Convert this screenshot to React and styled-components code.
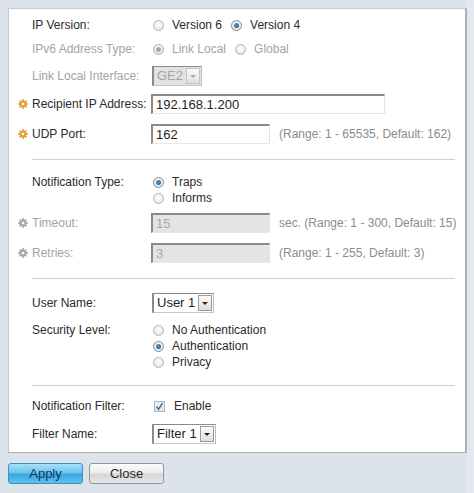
import React from "react";
import styled, { createGlobalStyle, css } from "styled-components";

const Global = createGlobalStyle`
  html, body { margin: 0; padding: 0; background: #dce3ea; }
  body { font-family: "Liberation Sans", Arial, sans-serif; font-size: 12px; color: #2a2a2a; }
`;

const Page = styled.div`
  width: 474px;
  height: 493px;
  box-sizing: border-box;
  padding: 8px 7px 0 8px;
  background: linear-gradient(to right, #dce3ea 0, #dce3ea 466px, #e3e9ee 468px);
`;

const Panel = styled.div`
  background: #fff;
  border: 1px solid #c3cbd2;
  border-right: 2px solid #aab2b8;
  border-bottom: 1px solid #a9b1b7;
  padding: 4px 10px 2px 9px;
`;

const Row = styled.div`
  display: grid;
  grid-template-columns: 14px 119px 1fr;
  align-items: ${(p) => (p.$top ? "start" : "center")};
  height: ${(p) => p.$h}px;
  box-sizing: border-box;
  margin-top: ${(p) => p.$mt || 0}px;
`;

const IconCell = styled.span`
  display: flex;
  align-items: center;
  height: 100%;
`;

const Label = styled.span`
  color: ${(p) => (p.$disabled ? "#a3a3a3" : "#2a2a2a")};
  white-space: nowrap;
  line-height: 16px;
`;

const Controls = styled.div`
  display: flex;
  align-items: center;
  padding-left: 2px;
`;

const Stack = styled.div`
  display: flex;
  flex-direction: column;
  padding-left: 2px;
`;

const Divider = styled.div`
  height: 1px;
  background: #cfcfcf;
  margin: ${(p) => p.$mt}px 0 ${(p) => p.$mb}px 14px;
`;

const RadioItem = styled.label`
  display: flex;
  align-items: center;
  height: 16px;
  margin-right: 9px;
  color: ${(p) => (p.$disabled ? "#a3a3a3" : "#2a2a2a")};
  white-space: nowrap;
`;

const RadioDot = styled.span`
  width: 9px;
  height: 9px;
  border-radius: 50%;
  border: 1px solid #b4b4b4;
  background: radial-gradient(circle at 50% 40%, #ffffff 0%, #eeeeee 55%, #d6d6d6 100%);
  margin-right: 8px;
  position: relative;
  flex: none;
  ${(p) =>
    p.$checked &&
    css`
      border-color: ${p.$disabled ? "#b0b0b0" : "#7a8d9c"};
      &::after {
        content: "";
        position: absolute;
        left: 2px;
        top: 2px;
        width: 5px;
        height: 5px;
        border-radius: 50%;
        background: ${p.$disabled
          ? "radial-gradient(circle, #9a9a9a 0%, #bdbdbd 100%)"
          : "radial-gradient(circle at 40% 40%, #5e97c4 0%, #1f4f78 100%)"};
      }
    `}
`;

const TextInput = styled.div`
  width: ${(p) => p.$w}px;
  height: 20px;
  box-sizing: border-box;
  margin-left: -2px;
  border-style: solid;
  border-width: 2px 1px 1px 2px;
  border-color: #8a8a8a #e2e2e2 #e8e8e8 #8a8a8a;
  background: ${(p) => (p.$disabled ? "#e4e4e4" : "#fff")};
  color: ${(p) => (p.$disabled ? "#a8a8a8" : "#1e1e1e")};
  font-size: 13px;
  line-height: 17px;
  padding-left: 3px;
  flex: none;
`;

const Hint = styled.span`
  color: #8c8c8c;
  margin-left: 9px;
  white-space: nowrap;
`;

const SelectBox = styled.div`
  display: inline-flex;
  align-items: stretch;
  height: 20px;
  margin-left: -1px;
  box-sizing: border-box;
  border-style: solid;
  border-width: 1px 1px 1px 2px;
  border-color: #8a8a8a #bdbdbd #c8c8c8 #8a8a8a;
  background: ${(p) => (p.$disabled ? "#e2e2e2" : "#fff")};
  color: ${(p) => (p.$disabled ? "#a5a5a5" : "#1e1e1e")};
  font-size: 13px;
`;

const SelectText = styled.span`
  padding: 0 3px 0 3px;
  line-height: 18px;
`;

const SelectBtn = styled.span`
  width: 14px;
  margin: 1px 1px 1px 0;
  box-sizing: border-box;
  border: 1px solid ${(p) => (p.$disabled ? "#c4c4c4" : "#9a9a9a")};
  background: linear-gradient(#fbfbfb, #dedede);
  display: flex;
  align-items: center;
  justify-content: center;
  &::after {
    content: "";
    border-left: 3px solid transparent;
    border-right: 3px solid transparent;
    border-top: 3px solid ${(p) => (p.$disabled ? "#aaa" : "#222")};
  }
`;

const CheckItem = styled.label`
  display: flex;
  align-items: center;
  height: 16px;
`;

const CheckBox = styled.span`
  width: 11px;
  height: 11px;
  box-sizing: border-box;
  border: 1px solid #a9b6c3;
  background: linear-gradient(#eef2f6, #dfe6ee);
  margin: 0 9px 0 1px;
  display: flex;
  align-items: center;
  justify-content: center;
`;

const Buttons = styled.div`
  display: flex;
  gap: 6px;
  margin-top: 10px;
`;

const Button = styled.button`
  width: 75px;
  height: 21px;
  border-radius: 3px;
  font-family: "Liberation Sans", Arial, sans-serif;
  font-size: 13px;
  padding: 0;
  ${(p) =>
    p.$primary
      ? css`
          border: 1px solid #3d8fbf;
          background: linear-gradient(#a8e0fa 0%, #6cc4ef 45%, #39a8e0 55%, #5ec0ee 100%);
          color: #13365a;
        `
      : css`
          border: 1px solid #8f979c;
          background: linear-gradient(#fdfdfd 0%, #ececec 45%, #d6d6d6 55%, #e6e6e6 100%);
          color: #2b2b2b;
        `}
`;

const Gear = ({ color }) => (
  <svg width="10" height="10" viewBox="0 0 10 10">
    <g fill={color}>
      {[0, 45, 90, 135].map((a) => (
        <rect key={a} x="4" y="0.3" width="2" height="9.4" transform={`rotate(${a} 5 5)`} />
      ))}
      <circle cx="5" cy="5" r="3.3" />
    </g>
    <circle cx="5" cy="5" r="1.3" fill="#fff" />
  </svg>
);

const Radio = ({ checked, disabled, children }) => (
  <RadioItem $disabled={disabled}>
    <RadioDot $checked={checked} $disabled={disabled} />
    {children}
  </RadioItem>
);

const Select = ({ value, disabled }) => (
  <SelectBox $disabled={disabled}>
    <SelectText>{value}</SelectText>
    <SelectBtn $disabled={disabled} />
  </SelectBox>
);

export default function App() {
  return (
    <Page>
      <Global />
      <Panel>
        <Row $h={24}>
          <span />
          <Label>IP Version:</Label>
          <Controls>
            <Radio>Version 6</Radio>
            <Radio checked>Version 4</Radio>
          </Controls>
        </Row>
        <Row $h={24}>
          <span />
          <Label $disabled>IPv6 Address Type:</Label>
          <Controls>
            <Radio checked disabled>Link Local</Radio>
            <Radio disabled>Global</Radio>
          </Controls>
        </Row>
        <Row $h={30}>
          <span />
          <Label $disabled>Link Local Interface:</Label>
          <Controls>
            <Select value="GE2" disabled />
          </Controls>
        </Row>
        <Row $h={26}>
          <IconCell><Gear color="#e7a033" /></IconCell>
          <Label>Recipient IP Address:</Label>
          <Controls>
            <TextInput $w={234}>192.168.1.200</TextInput>
          </Controls>
        </Row>
        <Row $h={34}>
          <IconCell><Gear color="#e7a033" /></IconCell>
          <Label>UDP Port:</Label>
          <Controls>
            <TextInput $w={119}>162</TextInput>
            <Hint>(Range: 1 - 65535, Default: 162)</Hint>
          </Controls>
        </Row>
        <Divider $mt={8} $mb={14} />
        <Row $h={32} $top>
          <span />
          <Label>Notification Type:</Label>
          <Stack>
            <Radio checked>Traps</Radio>
            <Radio>Informs</Radio>
          </Stack>
        </Row>
        <Row $h={34}>
          <IconCell><Gear color="#a9a9a9" /></IconCell>
          <Label $disabled>Timeout:</Label>
          <Controls>
            <TextInput $w={119} $disabled>15</TextInput>
            <Hint>sec. (Range: 1 - 300, Default: 15)</Hint>
          </Controls>
        </Row>
        <Row $h={26}>
          <IconCell><Gear color="#a9a9a9" /></IconCell>
          <Label $disabled>Retries:</Label>
          <Controls>
            <TextInput $w={119} $disabled>3</TextInput>
            <Hint>(Range: 1 - 255, Default: 3)</Hint>
          </Controls>
        </Row>
        <Divider $mt={12} $mb={10} />
        <Row $h={28}>
          <span />
          <Label>User Name:</Label>
          <Controls>
            <Select value="User 1" />
          </Controls>
        </Row>
        <Row $h={48} $top $mt={5}>
          <span />
          <Label>Security Level:</Label>
          <Stack>
            <Radio>No Authentication</Radio>
            <Radio checked>Authentication</Radio>
            <Radio>Privacy</Radio>
          </Stack>
        </Row>
        <Divider $mt={15} $mb={8} />
        <Row $h={24}>
          <span />
          <Label>Notification Filter:</Label>
          <Controls>
            <CheckItem>
              <CheckBox>
                <svg width="9" height="9" viewBox="0 0 9 9">
                  <path d="M1.5 4.5 L3.6 7.2 L7.6 1" fill="none" stroke="#4d6b95" strokeWidth="1.4" />
                </svg>
              </CheckBox>
              Enable
            </CheckItem>
          </Controls>
        </Row>
        <Row $h={32}>
          <span />
          <Label>Filter Name:</Label>
          <Controls>
            <Select value="Filter 1" />
          </Controls>
        </Row>
      </Panel>
      <Buttons>
        <Button $primary>Apply</Button>
        <Button>Close</Button>
      </Buttons>
    </Page>
  );
}
